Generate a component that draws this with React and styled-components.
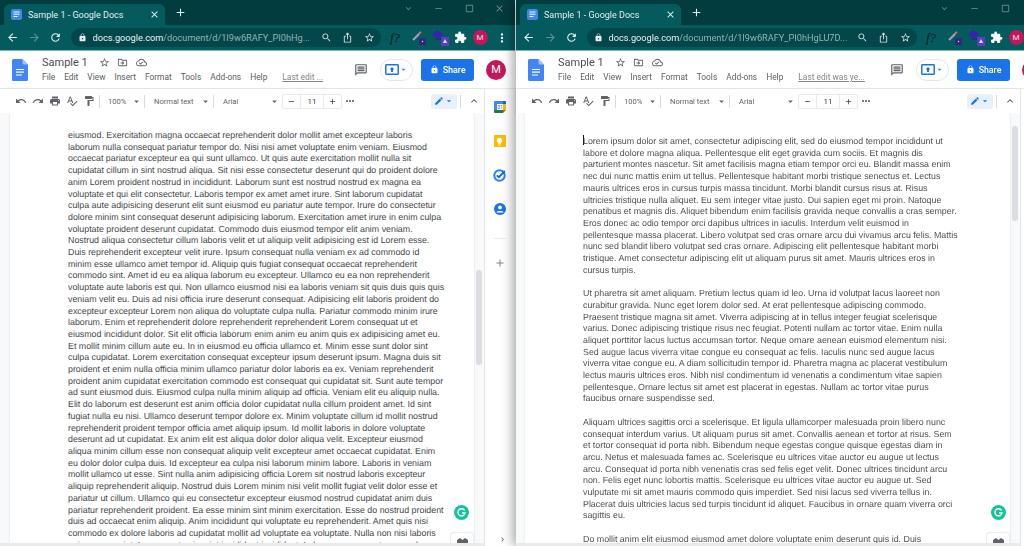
import styled, { createGlobalStyle } from "styled-components";
import {
  MdAdd,
  MdArrowBack,
  MdArrowDropDown,
  MdArrowForward,
  MdClose,
  MdCropSquare,
  MdEdit,
  MdExpandLess,
  MdExtension,
  MdFormatPaint,
  MdIosShare,
  MdKeyboardArrowDown,
  MdKeyboardArrowRight,
  MdLightbulb,
  MdLock,
  MdMoreHoriz,
  MdMoreVert,
  MdOutlineCloudDone,
  MdOutlineDriveFileMove,
  MdOutlineMessage,
  MdPrint,
  MdRedo,
  MdRefresh,
  MdRemove,
  MdSearch,
  MdSpellcheck,
  MdStarBorder,
  MdUndo,
} from "react-icons/md";

// ========== page text ==========
const leftText = [
  [
    "eiusmod. Exercitation magna occaecat reprehenderit dolor mollit amet excepteur laboris",
    "laborum nulla consequat pariatur tempor do. Nisi nisi amet voluptate enim veniam. Eiusmod",
    "occaecat pariatur excepteur ea qui sunt ullamco. Ut quis aute exercitation mollit nulla sit",
    "cupidatat cillum in sint nostrud aliqua. Sit nisi esse consectetur deserunt qui do proident dolore",
    "anim Lorem proident nostrud in incididunt. Laborum sunt est nostrud nostrud ex magna ea",
    "voluptate et qui elit consectetur. Laboris tempor ex amet amet irure. Sint laborum cupidatat",
    "culpa aute adipisicing deserunt elit sunt eiusmod eu pariatur aute tempor. Irure do consectetur",
    "dolore minim sint consequat deserunt adipisicing laborum. Exercitation amet irure in enim culpa",
    "voluptate proident deserunt cupidatat. Commodo duis eiusmod tempor elit anim veniam.",
    "Nostrud aliqua consectetur cillum laboris velit et ut aliquip velit adipisicing est id Lorem esse.",
    "Duis reprehenderit excepteur velit irure. Ipsum consequat nulla veniam ex ad commodo id",
    "minim esse ullamco amet tempor id. Aliquip quis fugiat consequat occaecat reprehenderit",
    "commodo sint. Amet id eu ea aliqua laborum eu excepteur. Ullamco eu ea non reprehenderit",
    "voluptate aute laboris est qui. Non ullamco eiusmod nisi ea laboris veniam sit quis duis quis quis",
    "veniam velit eu. Duis ad nisi officia irure deserunt consequat. Adipisicing elit laboris proident do",
    "excepteur excepteur Lorem non aliqua do voluptate culpa nulla. Pariatur commodo minim irure",
    "laborum. Enim et reprehenderit dolore reprehenderit reprehenderit Lorem consequat ut et",
    "eiusmod incididunt dolor. Sit elit officia laborum enim anim eu anim quis ex adipisicing amet eu.",
    "Et mollit minim cillum aute eu. In in eiusmod eu officia ullamco et. Minim esse sunt dolor sint",
    "culpa cupidatat. Lorem exercitation consequat excepteur ipsum deserunt ipsum. Magna duis sit",
    "proident et enim nulla officia minim ullamco pariatur dolor laboris ea ex. Veniam reprehenderit",
    "proident anim cupidatat exercitation commodo est consequat qui cupidatat sit. Sunt aute tempor",
    "ad sunt eiusmod duis. Eiusmod culpa nulla minim aliquip ad officia. Veniam elit eu aliquip nulla.",
    "Elit do laborum est deserunt est anim officia dolor cupidatat nulla cillum proident amet. Id sint",
    "fugiat nulla eu nisi. Ullamco deserunt tempor dolore ex. Minim voluptate cillum id mollit nostrud",
    "reprehenderit proident tempor officia amet aliquip ipsum. Id mollit laboris in dolore voluptate",
    "deserunt ad ut cupidatat. Ex anim elit est aliqua dolor dolor aliqua velit. Excepteur eiusmod",
    "aliqua minim cillum esse non consequat aliquip velit excepteur amet occaecat cupidatat. Enim",
    "eu dolor dolor culpa duis. Id excepteur ea culpa nisi laborum minim labore. Laboris in veniam",
    "mollit ullamco ut esse. Sint nulla anim adipisicing officia Lorem sit nostrud laboris excepteur",
    "aliquip reprehenderit aliquip. Nostrud duis Lorem minim nisi velit mollit fugiat velit dolor esse et",
    "pariatur ut cillum. Ullamco qui eu consectetur excepteur eiusmod nostrud cupidatat anim duis",
    "pariatur reprehenderit proident. Ea esse minim sint minim exercitation. Esse do nostrud proident",
    "duis ad occaecat enim aliquip. Anim incididunt qui voluptate eu reprehenderit. Amet quis nisi",
    "commodo ex dolore laboris ad cupidatat mollit ad voluptate ea voluptate. Nulla non nisi laboris",
    "anim magna sint. Ipsum sunt anim sint incididunt incididunt. Laborum consequat commodo",
  ],
];

const rightText = [
  [
    "Lorem ipsum dolor sit amet, consectetur adipiscing elit, sed do eiusmod tempor incididunt ut",
    "labore et dolore magna aliqua. Pellentesque elit eget gravida cum sociis. Et magnis dis",
    "parturient montes nascetur. Sit amet facilisis magna etiam tempor orci eu. Blandit massa enim",
    "nec dui nunc mattis enim ut tellus. Pellentesque habitant morbi tristique senectus et. Lectus",
    "mauris ultrices eros in cursus turpis massa tincidunt. Morbi blandit cursus risus at. Risus",
    "ultricies tristique nulla aliquet. Eu sem integer vitae justo. Dui sapien eget mi proin. Natoque",
    "penatibus et magnis dis. Aliquet bibendum enim facilisis gravida neque convallis a cras semper.",
    "Eros donec ac odio tempor orci dapibus ultrices in iaculis. Interdum velit euismod in",
    "pellentesque massa placerat. Libero volutpat sed cras ornare arcu dui vivamus arcu felis. Mattis",
    "nunc sed blandit libero volutpat sed cras ornare. Adipiscing elit pellentesque habitant morbi",
    "tristique. Amet consectetur adipiscing elit ut aliquam purus sit amet. Mauris ultrices eros in",
    "cursus turpis.",
  ],
  [
    "Ut pharetra sit amet aliquam. Pretium lectus quam id leo. Urna id volutpat lacus laoreet non",
    "curabitur gravida. Nunc eget lorem dolor sed. At erat pellentesque adipiscing commodo.",
    "Praesent tristique magna sit amet. Viverra adipiscing at in tellus integer feugiat scelerisque",
    "varius. Donec adipiscing tristique risus nec feugiat. Potenti nullam ac tortor vitae. Enim nulla",
    "aliquet porttitor lacus luctus accumsan tortor. Neque ornare aenean euismod elementum nisi.",
    "Sed augue lacus viverra vitae congue eu consequat ac felis. Iaculis nunc sed augue lacus",
    "viverra vitae congue eu. A diam sollicitudin tempor id. Pharetra magna ac placerat vestibulum",
    "lectus mauris ultrices eros. Nibh nisl condimentum id venenatis a condimentum vitae sapien",
    "pellentesque. Ornare lectus sit amet est placerat in egestas. Nullam ac tortor vitae purus",
    "faucibus ornare suspendisse sed.",
  ],
  [
    "Aliquam ultrices sagittis orci a scelerisque. Et ligula ullamcorper malesuada proin libero nunc",
    "consequat interdum varius. Ut aliquam purus sit amet. Convallis aenean et tortor at risus. Sem",
    "et tortor consequat id porta nibh. Bibendum neque egestas congue quisque egestas diam in",
    "arcu. Netus et malesuada fames ac. Scelerisque eu ultrices vitae auctor eu augue ut lectus",
    "arcu. Consequat id porta nibh venenatis cras sed felis eget velit. Donec ultrices tincidunt arcu",
    "non. Felis eget nunc lobortis mattis. Scelerisque eu ultrices vitae auctor eu augue ut. Sed",
    "vulputate mi sit amet mauris commodo quis imperdiet. Sed nisi lacus sed viverra tellus in.",
    "Placerat duis ultricies lacus sed turpis tincidunt id aliquet. Faucibus in ornare quam viverra orci",
    "sagittis eu.",
  ],
  ["Do mollit anim elit eiusmod eiusmod amet dolore voluptate enim deserunt quis id. Duis"],
];

// ========== styles ==========
const GlobalStyle = createGlobalStyle`
  html, body {
    margin: 0;
    padding: 0;
    height: 546px;
    overflow: hidden;
    background: #ffffff;
  }
  * {
    box-sizing: border-box;
  }
`;

const Screen = styled.div`
  display: flex;
  gap: 1px;
  width: 1024px;
  height: 546px;
  overflow: hidden;
  font-family: Roboto, "Liberation Sans", sans-serif;
  filter: blur(0.4px);
`;

const Window = styled.div`
  position: relative;
  flex: 0 0 ${(p) => p.$width}px;
  z-index: ${(p) => p.$z};
  height: 546px;
  display: flex;
  flex-direction: column;
  background: #ffffff;
  box-shadow: ${(p) => (p.$shadow ? "-3px 0 11px rgba(0, 0, 0, 0.36)" : "none")};
`;

const TabStrip = styled.div`
  height: 25px;
  background: #033c3e;
  display: flex;
  align-items: flex-end;
  padding-left: 4px;
  color: #cfe3e3;
`;

const Tab = styled.div`
  width: 161px;
  height: 21px;
  background: #055a5e;
  border-radius: 6px 6px 0 0;
  display: flex;
  align-items: center;
  padding: 0 5px 0 7px;
  color: #e3eeee;
  font-size: 9px;
`;

const TabTitle = styled.span`
  flex: 1;
  margin-left: 6px;
  white-space: nowrap;
`;

const NewTab = styled.div`
  width: 30px;
  height: 25px;
  display: flex;
  align-items: center;
  justify-content: center;
  color: #e6f0f0;
  font-size: 13px;
`;

const WindowControls = styled.div`
  margin-left: auto;
  align-self: flex-start;
  height: 16px;
  display: flex;
  align-items: center;
  color: #5f8688;
  font-size: 11px;
`;

const WindowControl = styled.div`
  width: 30.5px;
  display: flex;
  justify-content: center;
`;

const AddressBar = styled.div`
  height: 26px;
  background: #055a5e;
  border-bottom: 1px solid #79b6b6;
  display: flex;
  align-items: center;
  padding-left: 2px;
  color: #e3eeee;
`;

const NavButton = styled.div`
  width: 21.5px;
  display: flex;
  justify-content: center;
  color: ${(p) => (p.$dim ? "#5d9294" : "#e6f0f0")};
  font-size: 13px;
`;

const Omnibox = styled.div`
  flex: 1;
  min-width: 0;
  margin-left: 4px;
  height: 19px;
  border-radius: 10px;
  background: #03474b;
  display: flex;
  align-items: center;
  padding: 0 1px 0 7px;
  font-size: 9.2px;
`;

const Url = styled.div`
  flex: 1;
  margin-left: 6px;
  white-space: nowrap;
  overflow: hidden;
  color: #8fb3b4;

  b {
    font-weight: 400;
    color: #e9f2f2;
  }
`;

const OmniIcon = styled.div`
  width: 21.5px;
  display: flex;
  justify-content: center;
  color: #cfe0e0;
  font-size: 11px;
`;

const Extensions = styled.div`
  width: 134px;
  flex: none;
  display: flex;
  align-items: center;
`;

const Extension = styled.div`
  width: ${(p) => p.$w}px;
  display: flex;
  justify-content: center;
  align-items: center;
  color: #f3f7f7;
  font-size: ${(p) => p.$size || 13}px;
`;

const FormulaIcon = styled.span`
  font-family: "Liberation Serif", serif;
  font-style: italic;
  font-size: 13px;
  color: #061414;
`;

const ProfileBadge = styled.div`
  width: 15px;
  height: 15px;
  border-radius: 50%;
  background: #c2185b;
  color: #f7dbe6;
  font-size: 8px;
  display: flex;
  align-items: center;
  justify-content: center;
`;

const DocsHeader = styled.div`
  height: 38px;
  flex: none;
  display: flex;
  align-items: center;
  padding: 0 9px 0 12px;
  border-bottom: 1px solid #e8eaed;
  background: #ffffff;
`;

const TitleBlock = styled.div`
  margin-left: 14px;
  display: flex;
  flex-direction: column;
  gap: 3px;
`;

const TitleRow = styled.div`
  display: flex;
  align-items: center;
  color: #5f6368;
  font-size: 10px;
`;

const DocTitle = styled.span`
  font-size: 11px;
  color: #4a4d52;
  width: 53px;
  white-space: nowrap;
`;

const TitleIcon = styled.span`
  width: 18.5px;
  display: flex;
  justify-content: center;
  font-size: 11px;
`;

const MenuRow = styled.div`
  display: flex;
  gap: 9px;
  font-size: 8.4px;
  line-height: 11px;
  color: #5a5e63;
  white-space: nowrap;
`;

const LastEdit = styled.span`
  margin-left: 6px;
  color: #80868b;
  text-decoration: underline;
`;

const HeaderActions = styled.div`
  margin-left: auto;
  display: flex;
  align-items: center;
`;

const CommentButton = styled.div`
  width: 20px;
  display: flex;
  justify-content: center;
  color: #5f6368;
  font-size: 14px;
`;

const PresentPill = styled.div`
  margin-left: 9px;
  width: 33px;
  height: 22px;
  border: 1px solid #e3e5e8;
  border-radius: 11px;
  display: flex;
  align-items: center;
  justify-content: center;
  color: #1a73e8;
  font-size: 9px;
`;

const ShareButton = styled.div`
  margin-left: 8px;
  width: 53px;
  height: 22px;
  border-radius: 3px;
  background: #1a73e8;
  color: #ffffff;
  font-size: 8.8px;
  font-weight: 500;
  display: flex;
  align-items: center;
  justify-content: center;
  gap: 4px;
`;

const Avatar = styled.div`
  margin-left: 12px;
  width: 20px;
  height: 20px;
  border-radius: 50%;
  background: #c2185b;
  color: #ffffff;
  font-size: 11px;
  display: flex;
  align-items: center;
  justify-content: center;
`;

const Body = styled.div`
  flex: 1;
  min-height: 0;
  display: flex;
`;

const Main = styled.div`
  flex: 1;
  min-width: 0;
  display: flex;
  flex-direction: column;
`;

const Toolbar = styled.div`
  height: 24px;
  flex: none;
  display: flex;
  align-items: center;
  padding-left: 12px;
  background: #ffffff;
  box-shadow: 0 1px 3px rgba(60, 64, 67, 0.18);
  color: #5f6368;
  position: relative;
`;

const Tool = styled.div`
  width: ${(p) => p.$w || 17}px;
  display: flex;
  justify-content: center;
  font-size: 12px;
`;

const Separator = styled.div`
  width: 1px;
  height: 13px;
  margin: 0 ${(p) => p.$gap || 0}px;
  background: #dadce0;
`;

const Dropdown = styled.div`
  width: ${(p) => p.$w}px;
  padding: 0 2px 0 ${(p) => p.$pad}px;
  display: flex;
  align-items: center;
  justify-content: space-between;
  font-size: 7.6px;
  color: #5f6368;
  white-space: nowrap;

  svg {
    font-size: 11px;
  }
`;

const SizeBox = styled.div`
  width: 60px;
  height: 15px;
  display: flex;
  align-items: center;
  border: 1px solid #e8eaed;
  border-radius: 2px;
  font-size: 8px;
  color: #3c4043;
`;

const SizeStep = styled.div`
  width: 17px;
  display: flex;
  justify-content: center;
  font-size: 9px;
`;

const SizeValue = styled.div`
  flex: 1;
  height: 100%;
  display: flex;
  align-items: center;
  justify-content: center;
  border-left: 1px solid #e8eaed;
  border-right: 1px solid #e8eaed;
`;

const ToolEnd = styled.div`
  margin-left: auto;
  display: flex;
  align-items: center;
`;

const EditMode = styled.div`
  width: 26px;
  height: 15px;
  border-radius: 3px;
  background: #e8f0fe;
  color: #1a73e8;
  display: flex;
  align-items: center;
  justify-content: center;
  font-size: 10px;
`;

const Canvas = styled.div`
  position: relative;
  flex: 1;
  min-height: 0;
  display: flex;
  background: #f8f9fa;
  overflow: hidden;
  border-bottom: 3px solid #e8eaed;
`;

const Sheet = styled.div`
  margin-left: ${(p) => p.$left}px;
  width: ${(p) => p.$width}px;
  flex: none;
  background: #ffffff;
  padding: ${(p) => p.$top}px 0 0 ${(p) => p.$pad}px;
  box-shadow: 0 0 2px rgba(60, 64, 67, 0.15);
  font-family: "Liberation Sans", Arial, sans-serif;
  font-size: 8.85px;
  line-height: 11.7px;
  color: ${(p) => p.$color};
  text-rendering: geometricPrecision;
`;

const Paragraph = styled.div`
  margin-bottom: 11.7px;
`;

const Line = styled.div`
  white-space: nowrap;
`;

const Caret = styled.span`
  display: inline-block;
  width: 1px;
  height: 10px;
  margin-right: -1px;
  vertical-align: -1px;
  background: #111111;
`;

const ScrollTrack = styled.div`
  margin-left: 2px;
  width: 6px;
  flex: none;
  padding-top: ${(p) => p.$top}px;
`;

const ScrollThumb = styled.div`
  height: 95px;
  border-radius: 3px;
  background: #dadce0;
`;

const GrammarlyBadge = styled.div`
  position: absolute;
  top: 392px;
  left: ${(p) => p.$left}px;
  width: 15px;
  height: 15px;
  border-radius: 50%;
  background: #15c39a;
  color: #ffffff;
  display: flex;
  align-items: center;
  justify-content: center;
  font-size: 10px;
`;

const ExploreButton = styled.div`
  position: absolute;
  top: 420px;
  left: ${(p) => p.$left}px;
  width: 22px;
  height: 22px;
  border-radius: 3px;
  background: #ffffff;
  box-shadow: 0 0 2px rgba(60, 64, 67, 0.35);
  display: flex;
  justify-content: center;
  padding-top: 5px;
`;

const SidePanel = styled.div`
  width: 31px;
  flex: none;
  display: flex;
  flex-direction: column;
  align-items: center;
  border-left: 1px solid #e3e5e8;
  padding: 12px 1px 0 0;
  background: #ffffff;
  position: relative;
`;

const PanelIcon = styled.div`
  height: 34px;
  display: flex;
  justify-content: center;
`;

const KeepIcon = styled.div`
  width: 12px;
  height: 12px;
  border-radius: 1px;
  background: #fbbc04;
  color: #ffffff;
  display: flex;
  align-items: center;
  justify-content: center;
  font-size: 9px;
`;

const PanelDivider = styled.div`
  width: 12px;
  height: 1px;
  margin: 1px 0 18px;
  background: #e8eaed;
`;

const PanelAdd = styled.div`
  color: #80868b;
  font-size: 12px;
  display: flex;
`;

const ScreenEdge = styled.div`
  position: absolute;
  right: 0;
  bottom: 0;
  color: #5f6368;
  font-size: 9px;
  padding: 0 8px 0 0;
`;

// ========== drawings ==========
const DocsIcon = ({ size = 16, height = 22 }) => (
  <svg width={size} height={height} viewBox="0 0 16 22">
    <path d="M1.5 0H10.5L16 5.5V20.5A1.5 1.5 0 0 1 14.5 22H1.5A1.5 1.5 0 0 1 0 20.5V1.5A1.5 1.5 0 0 1 1.5 0Z" fill="#4285f4" />
    <path d="M10.5 0L16 5.5H12A1.5 1.5 0 0 1 10.5 4Z" fill="#a1c2fa" />
    <path d="M4 10.5H12M4 13.2H12M4 16H10" stroke="#ffffff" strokeWidth="1.2" />
  </svg>
);

const Favicon = () => (
  <svg width="11" height="11" viewBox="0 0 11 11">
    <rect width="11" height="11" rx="2" fill="#4285f4" />
    <path d="M2.5 3H8.5M2.5 5.2H8.5M2.5 7.5H6.5" stroke="#ffffff" strokeWidth="1" />
  </svg>
);

const PresentIcon = () => (
  <svg width="14" height="11" viewBox="0 0 14 11">
    <rect x="0.8" y="0.8" width="12.4" height="9.4" rx="0.6" fill="none" stroke="#1a73e8" strokeWidth="1.5" />
    <path d="M7 3L9.5 5.6H8V8H6V5.6H4.5Z" fill="#1a73e8" />
  </svg>
);

const PenExtension = () => (
  <svg width="15" height="15" viewBox="0 0 15 15">
    <path d="M1 10L9 2" stroke="#a9a3b8" strokeWidth="2" />
    <path d="M7 4L9 2L10 3L8 5Z" fill="#b5344b" />
    <rect x="7" y="8" width="7" height="7" fill="#2f2a78" />
    <circle cx="10.5" cy="11.5" r="0.7" fill="#d7d5ee" />
  </svg>
);

const StackExtension = () => (
  <svg width="17" height="16" viewBox="0 0 17 16">
    <path d="M5 0L11 4L7 9L0 5Z" fill="#3a1fb0" />
    <path d="M1 7L7 10L10 7V10H8L5 10Z" fill="#2a1688" />
    <rect x="9" y="7" width="8" height="9" fill="#5a3dc4" />
    <path d="M13 9L15 13H11Z" fill="#e6e1fa" />
  </svg>
);

const CalendarIcon = () => (
  <svg width="12" height="12" viewBox="0 0 12 12">
    <rect width="12" height="12" rx="1" fill="#ffffff" />
    <path d="M0 1A1 1 0 0 1 1 0H9V3H3V9H0Z" fill="#4285f4" />
    <path d="M9 0H11A1 1 0 0 1 12 1V3H9Z" fill="#1967d2" />
    <path d="M9 3H12V9H9Z" fill="#fbbc04" />
    <path d="M0 9H9V12H1A1 1 0 0 1 0 11Z" fill="#188038" />
    <path d="M9 9H12L9 12Z" fill="#ea4335" />
    <text x="6" y="8" fontSize="5" textAnchor="middle" fill="#1a73e8" fontFamily="Roboto, sans-serif">31</text>
  </svg>
);

const TasksIcon = () => (
  <svg width="13" height="13" viewBox="0 0 13 13">
    <circle cx="6.5" cy="6.5" r="5.2" fill="none" stroke="#2684fc" strokeWidth="2" />
    <path d="M3.8 6.3L5.8 8.2L11.8 2" fill="none" stroke="#1a62d6" strokeWidth="1.8" />
  </svg>
);

const ContactsIcon = () => (
  <svg width="12" height="12" viewBox="0 0 12 12">
    <circle cx="6" cy="6" r="6" fill="#1a73e8" />
    <circle cx="6" cy="4.4" r="1.9" fill="#ffffff" />
    <path d="M2.4 9.4C3 7.6 9 7.6 9.6 9.4Z" fill="#ffffff" />
  </svg>
);

const ExploreIcon = () => (
  <svg width="11" height="11" viewBox="0 0 11 11">
    <path d="M0 2L3 0L5.5 2L8 0L11 2V11H0Z" fill="#5f6368" />
  </svg>
);

const GrammarlyIcon = () => (
  <svg width="9" height="9" viewBox="0 0 9 9">
    <path d="M7.6 2.4A3.6 3.6 0 1 0 8.1 5H5" fill="none" stroke="#ffffff" strokeWidth="1.3" />
  </svg>
);

// ========== parts ==========
const BrowserBar = ({ urlTail }) => (
  <>
    <TabStrip>
      <Tab>
        <Favicon />
        <TabTitle>Sample 1 - Google Docs</TabTitle>
        <MdClose size={11} />
      </Tab>
      <NewTab>
        <MdAdd />
      </NewTab>
      <WindowControls>
        <WindowControl>
          <MdKeyboardArrowDown />
        </WindowControl>
        <WindowControl>
          <MdRemove />
        </WindowControl>
        <WindowControl>
          <MdCropSquare />
        </WindowControl>
        <WindowControl>
          <MdClose />
        </WindowControl>
      </WindowControls>
    </TabStrip>
    <AddressBar>
      <NavButton>
        <MdArrowBack />
      </NavButton>
      <NavButton $dim>
        <MdArrowForward />
      </NavButton>
      <NavButton>
        <MdRefresh />
      </NavButton>
      <Omnibox>
        <MdLock size={9} />
        <Url>
          <b>docs.google.com</b>
          {urlTail}
        </Url>
        <OmniIcon>
          <MdSearch />
        </OmniIcon>
        <OmniIcon>
          <MdIosShare />
        </OmniIcon>
        <OmniIcon>
          <MdStarBorder />
        </OmniIcon>
      </Omnibox>
      <Extensions>
        <Extension $w={28}>
          <FormulaIcon>f?</FormulaIcon>
        </Extension>
        <Extension $w={20}>
          <PenExtension />
        </Extension>
        <Extension $w={22}>
          <StackExtension />
        </Extension>
        <Extension $w={18}>
          <MdExtension />
        </Extension>
        <Extension $w={22}>
          <ProfileBadge>M</ProfileBadge>
        </Extension>
        <Extension $w={22} $size={14}>
          <MdMoreVert />
        </Extension>
      </Extensions>
    </AddressBar>
  </>
);

const Header = ({ lastEdit }) => (
  <DocsHeader>
    <DocsIcon />
    <TitleBlock>
      <TitleRow>
        <DocTitle>Sample 1</DocTitle>
        <TitleIcon>
          <MdStarBorder />
        </TitleIcon>
        <TitleIcon>
          <MdOutlineDriveFileMove />
        </TitleIcon>
        <TitleIcon>
          <MdOutlineCloudDone />
        </TitleIcon>
      </TitleRow>
      <MenuRow>
        <span>File</span>
        <span>Edit</span>
        <span>View</span>
        <span>Insert</span>
        <span>Format</span>
        <span>Tools</span>
        <span>Add-ons</span>
        <span>Help</span>
        <LastEdit>{lastEdit}</LastEdit>
      </MenuRow>
    </TitleBlock>
    <HeaderActions>
      <CommentButton>
        <MdOutlineMessage />
      </CommentButton>
      <PresentPill>
        <PresentIcon />
        <MdArrowDropDown />
      </PresentPill>
      <ShareButton>
        <MdLock size={9} />
        Share
      </ShareButton>
      <Avatar>M</Avatar>
    </HeaderActions>
  </DocsHeader>
);

const FormatBar = () => (
  <Toolbar>
    <Tool>
      <MdUndo />
    </Tool>
    <Tool>
      <MdRedo />
    </Tool>
    <Tool>
      <MdPrint />
    </Tool>
    <Tool>
      <MdSpellcheck />
    </Tool>
    <Tool>
      <MdFormatPaint />
    </Tool>
    <Separator $gap={2} />
    <Dropdown $w={42} $pad={6}>
      100%
      <MdArrowDropDown />
    </Dropdown>
    <Separator />
    <Dropdown $w={68} $pad={9}>
      Normal text
      <MdArrowDropDown />
    </Dropdown>
    <Separator />
    <Dropdown $w={68} $pad={9}>
      Arial
      <MdArrowDropDown />
    </Dropdown>
    <SizeBox>
      <SizeStep>
        <MdRemove />
      </SizeStep>
      <SizeValue>11</SizeValue>
      <SizeStep>
        <MdAdd />
      </SizeStep>
    </SizeBox>
    <Tool $w={16}>
      <MdMoreHoriz />
    </Tool>
    <ToolEnd>
      <EditMode>
        <MdEdit />
        <MdArrowDropDown />
      </EditMode>
      <Separator $gap={3} />
      <Tool $w={20}>
        <MdExpandLess />
      </Tool>
    </ToolEnd>
  </Toolbar>
);

const SideIcons = ({ edge }) => (
  <SidePanel>
    <PanelIcon>
      <CalendarIcon />
    </PanelIcon>
    <PanelIcon>
      <KeepIcon>
        <MdLightbulb />
      </KeepIcon>
    </PanelIcon>
    <PanelIcon>
      <TasksIcon />
    </PanelIcon>
    <PanelIcon>
      <ContactsIcon />
    </PanelIcon>
    <PanelDivider />
    <PanelAdd>
      <MdAdd />
    </PanelAdd>
    {edge && (
      <ScreenEdge>
        <MdKeyboardArrowRight />
      </ScreenEdge>
    )}
  </SidePanel>
);

const DocWindow = ({ sheet, text, urlTail, lastEdit, caret, width, shadow, z, marks, thumbTop, edge }) => (
  <Window $width={width} $shadow={shadow} $z={z}>
    <BrowserBar urlTail={urlTail} />
    <Header lastEdit={lastEdit} />
    <Body>
      <Main>
        <FormatBar />
        <Canvas>
          <Sheet {...sheet}>
            {text.map((para, i) => (
              <Paragraph key={i}>
                {para.map((line, j) => (
                  <Line key={j}>
                    {caret && i === 0 && j === 0 && <Caret />}
                    {line}
                  </Line>
                ))}
              </Paragraph>
            ))}
          </Sheet>
          <ScrollTrack $top={thumbTop}>
            <ScrollThumb />
          </ScrollTrack>
          <GrammarlyBadge $left={marks.grammarly}>
            <GrammarlyIcon />
          </GrammarlyBadge>
          <ExploreButton $left={marks.explore}>
            <ExploreIcon />
          </ExploreButton>
        </Canvas>
      </Main>
      <SideIcons edge={edge} />
    </Body>
  </Window>
);

const App = () => {
  return (
    <Screen>
      <GlobalStyle />
      <DocWindow
        width={515}
        z={1}
        text={leftText}
        urlTail="/document/d/1I9w6RAFY_PI0hHg..."
        lastEdit="Last edit ..."
        sheet={{ $left: 10, $width: 464, $top: 17, $pad: 58, $color: "#45474b" }}
        thumbTop={157}
        marks={{ grammarly: 454, explore: 451 }}
        edge
      />
      <DocWindow
        width={535}
        z={2}
        shadow
        caret
        text={rightText}
        urlTail="/document/d/1I9w6RAFY_PI0hHgLU7D..."
        lastEdit="Last edit was ye..."
        sheet={{ $left: 9, $width: 485, $top: 22, $pad: 58, $color: "#505050" }}
        thumbTop={13}
        marks={{ grammarly: 475, explore: 471 }}
      />
    </Screen>
  );
};

export default App;
